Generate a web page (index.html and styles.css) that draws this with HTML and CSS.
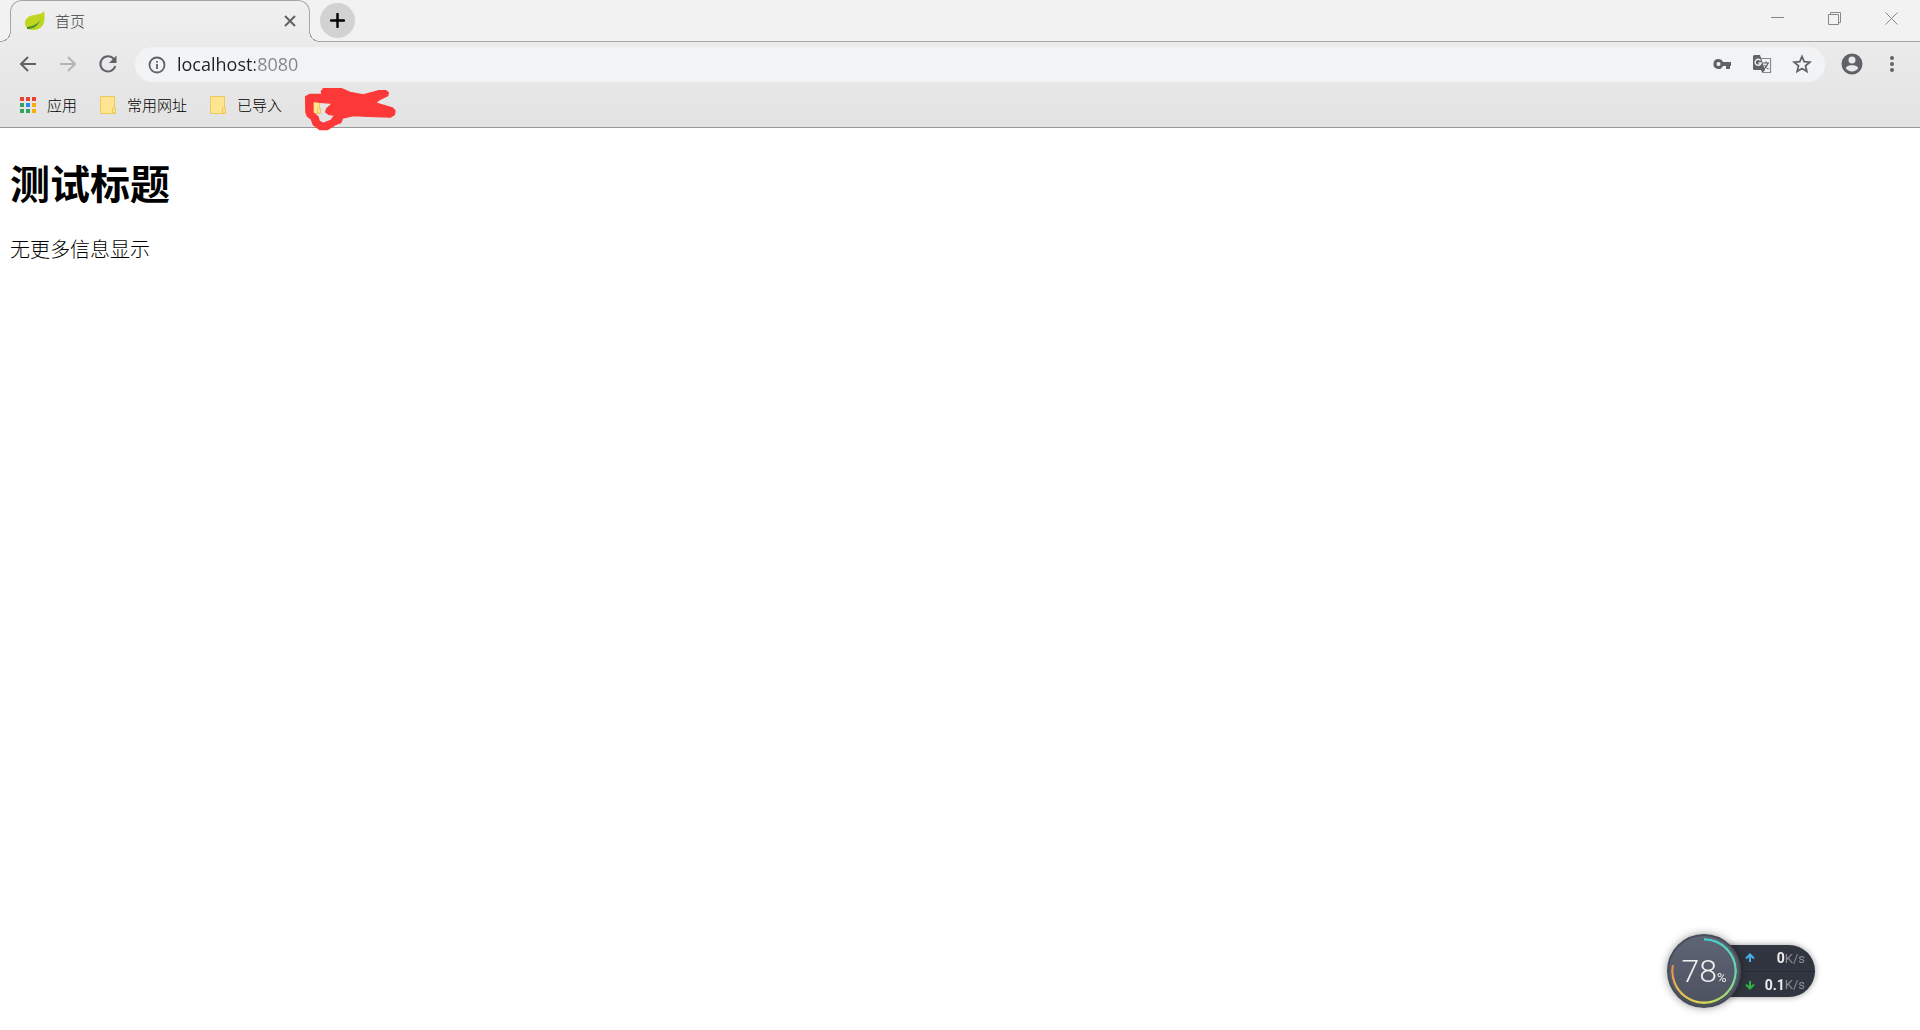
FILE: index.html
```html
<!DOCTYPE html>
<html lang="zh-CN">
<head>
    <meta charset="utf-8">
    <title>首页</title>
    <meta name="viewport" content="width=device-width, initial-scale=1">
    <link rel="stylesheet" href="styles.css">
</head>
<body>
    <header class="browser">
        <div class="tab-strip">
            <div class="tab">
                <svg class="leaf" width="22" height="22" viewBox="0 0 22 22">
                    <path d="M19 1C17 4 14 4 9 5C3 6 0 9 0 13C0 15 1 17 2 18C9 17 14 14 16 9C15 15 10 18 3 19C8 21 15 20 18 15C20 11 20 6 19 1Z" fill="#bfd51f"/>
                    <path d="M2 17C9 16 14 13 16 9C15 15 9 19 2 19Z" fill="#6fae22"/>
                    <path d="M2 17C7 17 11 15 14 12C11 17 7 19 2 19Z" fill="#458f25"/>
                </svg>
                <span class="tab-title">首页</span>
                <button class="tab-close" type="button" aria-label="关闭标签页">
                    <svg width="12" height="12" viewBox="0 0 12 12"><path d="M1 1L11 11M11 1L1 11" stroke="#5f6368" stroke-width="2"/></svg>
                </button>
            </div>
            <button class="new-tab" type="button" aria-label="新标签页">
                <svg width="15" height="15" viewBox="0 0 15 15"><path d="M7.500 1V14M1 7.500H14" stroke="#000" stroke-width="2.400" stroke-linecap="round"/></svg>
            </button>
            <div class="window-controls">
                <button type="button" aria-label="最小化">
                    <svg width="13" height="13" viewBox="0 0 13 13"><path d="M0 5.500H13" stroke="#888"/></svg>
                </button>
                <button type="button" aria-label="还原">
                    <svg width="13" height="13" viewBox="0 0 13 13" fill="none" stroke="#888"><path d="M.5 2.500H10.500V12.500H.5ZM2.500 2.500V.5H12.500V10.500H10.500"/></svg>
                </button>
                <button type="button" aria-label="关闭">
                    <svg width="13" height="13" viewBox="0 0 13 13"><path d="M.5 .5L12.500 12.500M12.500 .5L.5 12.500" stroke="#888"/></svg>
                </button>
            </div>
        </div>

        <div class="toolbar">
            <div class="nav">
                <button type="button" aria-label="后退">
                    <svg width="20" height="20" viewBox="0 0 20 20" fill="none" stroke="#5f6368" stroke-width="2"><path d="M18 10H3M10 3L3 10L10 17"/></svg>
                </button>
                <button type="button" aria-label="前进" disabled>
                    <svg width="20" height="20" viewBox="0 0 20 20" fill="none" stroke="#b3b4b6" stroke-width="2"><path d="M2 10H17M10 3L17 10L10 17"/></svg>
                </button>
                <button type="button" aria-label="重新加载">
                    <svg width="20" height="20" viewBox="0 0 20 20"><path d="M15.800 5A7.600 7.600 0 1 0 17.300 12" fill="none" stroke="#5f6368" stroke-width="2"/><path d="M18.500 1.500V9H11Z" fill="#5f6368"/></svg>
                </button>
            </div>
            <div class="omnibox">
                <svg class="info" width="18" height="18" viewBox="0 0 18 18"><circle cx="9" cy="9" r="7.500" fill="none" stroke="#5f6368" stroke-width="1.800"/><path d="M9 8V13M9 5V6.800" stroke="#5f6368" stroke-width="1.800"/></svg>
                <input class="address" type="text" value="localhost:8080" aria-label="地址栏" spellcheck="false">
                <button type="button" aria-label="密码">
                    <svg width="20" height="20" viewBox="0 0 20 20"><path d="M6.500 5A5 5 0 1 0 11 12H14V15H18V12H19V8H11A5 5 0 0 0 6.500 5Z M6.500 8A2 2 0 1 1 6.500 12A2 2 0 1 1 6.500 8Z" fill="#5f6368" fill-rule="evenodd"/></svg>
                </button>
                <button type="button" aria-label="翻译此页">
                    <svg width="20" height="20" viewBox="0 0 20 20">
                        <path d="M9 4.500H18.500V18.500H11" fill="none" stroke="#85888c" stroke-width="1.200"/>
                        <path d="M1 2.500Q1 1 2.500 1H8L13 16H2.500Q1 16 1 14.500Z M9 16H13L10.500 19Z" fill="#5f6368"/>
                        <path d="M8.500 6.500A3 3 0 1 0 9 9H6.500" fill="none" stroke="#f1f3f4" stroke-width="1.400"/>
                        <path d="M11 9H17M14 7.500V9M16 9Q15 13 12 15M12.500 11Q14 13.500 16.500 15" fill="none" stroke="#5f6368" stroke-width="1.200"/>
                    </svg>
                </button>
                <button type="button" aria-label="为此网页添加书签">
                    <svg width="20" height="20" viewBox="0 0 20 20"><path d="M10 2.500L12.200 7.700L17.800 8.200L13.500 11.900L14.800 17.400L10 14.500L5.200 17.400L6.500 11.900L2.200 8.200L7.800 7.700Z" fill="none" stroke="#5f6368" stroke-width="1.800"/></svg>
                </button>
            </div>
            <div class="nav">
                <button type="button" aria-label="用户">
                    <svg width="22" height="22" viewBox="0 0 22 22"><path d="M11 .5A10.500 10.500 0 1 0 11 21.500A10.500 10.500 0 1 0 11 .5ZM11 3.500A3.500 3.500 0 1 1 11 10.500A3.500 3.500 0 1 1 11 3.500ZM4.700 15C6 12.500 9 12.200 11 12.200S16 12.500 17.300 15C16 17.300 13.500 18.500 11 18.500S6 17.300 4.700 15Z" fill="#5f6368" fill-rule="evenodd"/></svg>
                </button>
                <button type="button" aria-label="菜单">
                    <svg width="20" height="20" viewBox="0 0 20 20" fill="#5f6368"><circle cx="10" cy="4" r="2"/><circle cx="10" cy="10" r="2"/><circle cx="10" cy="16" r="2"/></svg>
                </button>
            </div>
        </div>

        <nav class="bookmarks">
            <a href="#">
                <svg width="17" height="16" viewBox="0 0 17 16">
                    <path d="M0 0H4V4H0ZM6 0H10V4H6ZM12 0H16V4H12Z" fill="#ea4335"/>
                    <path d="M0 6H4V10H0ZM0 12H4V16H0ZM6 12H10V16H6Z" fill="#34a35a"/>
                    <path d="M6 6H10V10H6Z" fill="#2a8af0"/>
                    <path d="M12 6H16V10H12ZM12 12H16V16H12Z" fill="#f9ab0a"/>
                </svg>
                应用
            </a>
            <a href="#">
                <svg width="17" height="18" viewBox="0 0 17 18"><path d="M.5 .5H14.500V12H15.500V17.500H.5Z" fill="#ffe591" stroke="#edc85d"/><path d="M12.500 17V12.500Q14 11.500 15.500 12.500V17Z" fill="#ffe591" stroke="#edc85d"/></svg>
                常用网址
            </a>
            <a href="#">
                <svg width="17" height="18" viewBox="0 0 17 18"><path d="M.5 .5H14.500V12H15.500V17.500H.5Z" fill="#ffe591" stroke="#edc85d"/><path d="M12.500 17V12.500Q14 11.500 15.500 12.500V17Z" fill="#ffe591" stroke="#edc85d"/></svg>
                已导入
            </a>
            <a class="marked" href="#" aria-label="书签">
                <svg width="17" height="18" viewBox="0 0 17 18"><path d="M.5 .5H14.500V12H15.500V17.500H.5Z" fill="#ffe591" stroke="#edc85d"/><path d="M12.500 17V12.500Q14 11.500 15.500 12.500V17Z" fill="#ffe591" stroke="#edc85d"/></svg>
                <svg class="scribble" width="92" height="45" viewBox="15 9 276 135">
                    <path d="M64 22L70 14H124L150 25L190 33L237 20L258 20L265 26L263 35L240 46L226 57L277 72L285 80L283 92L272 99L225 98L160 95L128 102L122 116L106 122L82 137L60 137L40 122L34 106L22 97L18 84L17 38L30 31L66 31ZM39 52L60 55L98 58L80 74L77 84L86 91L104 94L94 108L70 118L58 112L54 98L39 86Z" fill="#fd3838" fill-rule="evenodd" stroke="#fd3838" stroke-width="4" stroke-linejoin="round"/>
                </svg>
            </a>
        </nav>
    </header>

    <main class="page">
        <h1>测试标题</h1>
        <p>无更多信息显示</p>
    </main>

    <aside class="monitor">
        <div class="gauge"><span class="percent">78</span><small>%</small></div>
        <div class="speeds">
            <div class="speed">
                <svg width="10" height="10" viewBox="0 0 10 10"><path d="M5 9V2M1 5.500L5 1.500L9 5.500" fill="none" stroke="#45b0ee" stroke-width="2"/></svg>
                <b>0</b><span>K/s</span>
            </div>
            <div class="speed">
                <svg width="10" height="10" viewBox="0 0 10 10"><path d="M5 1V8M1 4.500L5 8.500L9 4.500" fill="none" stroke="#2fb344" stroke-width="2"/></svg>
                <b>0.1</b><span>K/s</span>
            </div>
        </div>
    </aside>
</body>
</html>
```
FILE: styles.css
```css
:root {
    --line: #a6a6a6;
    --strip: #f2f2f2;
    --tab: #ebebeb;
    --omnibox: #f1f3f4;
}

* {
    box-sizing: border-box;
}

body {
    margin: 0;
    background: #fff;
    color: #000;
    font-family: "Noto Sans CJK SC", sans-serif;
    font-weight: 300;
}

button {
    display: flex;
    align-items: center;
    justify-content: center;
    padding: 0;
    border: none;
    background: none;
    cursor: pointer;
}

svg {
    display: block;
    flex: none;
}

/* Tab strip */
.tab-strip {
    display: flex;
    height: 42px;
    padding-left: 10px;
    background: var(--strip);
    border-bottom: 1px solid var(--line);
}

.tab {
    position: relative;
    display: flex;
    align-items: center;
    width: 300px;
    height: 42px;
    padding: 0 10px 2px 14px;
    background: linear-gradient(#f0f0f0, var(--tab));
    border: 1px solid var(--line);
    border-bottom: none;
    border-radius: 12px 12px 0 0;
}

/* curved feet on both sides of the tab */
.tab::before,
.tab::after {
    content: "";
    position: absolute;
    bottom: 0;
    width: 11px;
    height: 11px;
}

.tab::before {
    right: 100%;
    background: radial-gradient(circle at top left, var(--strip) 10px, var(--line) 10px, var(--line) 11px, var(--tab) 11px);
}

.tab::after {
    left: 100%;
    background: radial-gradient(circle at top right, var(--strip) 10px, var(--line) 10px, var(--line) 11px, var(--tab) 11px);
}

.tab-title {
    flex: 1;
    margin-left: 8px;
    font-size: 15px;
    color: #3c4043;
}

.tab-close {
    width: 18px;
    height: 18px;
}

.new-tab {
    width: 35px;
    height: 35px;
    margin: 3px 0 0 10px;
    border-radius: 50%;
    background: #d2d2d2;
}

.window-controls {
    display: flex;
    margin-left: auto;
}

.window-controls button {
    width: 57px;
    height: 37px;
}

/* Toolbar */
.toolbar {
    display: flex;
    align-items: center;
    gap: 7px;
    padding: 5px 8px 0;
    background: linear-gradient(var(--tab), #e7e7e7);
}

.nav {
    display: flex;
}

.nav button,
.omnibox button {
    width: 40px;
    height: 35px;
    padding-bottom: 1px;
}

.omnibox {
    flex: 1;
    display: flex;
    align-items: center;
    height: 35px;
    padding: 0 3px 0 13px;
    border-radius: 18px;
    background: var(--omnibox);
}

.address {
    flex: 1;
    min-width: 0;
    margin-left: 11px;
    padding: 0 0 2px;
    border: none;
    outline: none;
    font-family: "Open Sans", sans-serif;
    font-size: 18px;
    /* host is dark, port is grey */
    color: transparent;
    background: linear-gradient(to right, #202124 78px, #80868b 78px);
    -webkit-background-clip: text;
    background-clip: text;
}

/* Bookmarks */
.bookmarks {
    display: flex;
    align-items: center;
    gap: 23px;
    height: 46px;
    padding-left: 20px;
    background: linear-gradient(#e7e7e7, #e3e3e3);
    border-bottom: 1px solid #999;
}

.bookmarks a {
    display: flex;
    align-items: center;
    gap: 10px;
    font-size: 15px;
    color: #000;
    text-decoration: none;
}

.marked {
    position: relative;
}

.scribble {
    position: absolute;
    left: 0;
    top: -9px;
}

/* Page content */
.page {
    padding: 0 10px;
    font-size: 20px;
}

.page h1 {
    margin: 26px 0;
    font-size: 40px;
    font-weight: 700;
    line-height: 56px;
}

.page p {
    margin: 0;
    line-height: 26px;
}

/* Floating monitor */
.monitor {
    position: fixed;
    right: 105px;
    bottom: 22px;
    display: flex;
    align-items: center;
    font-family: Roboto, sans-serif;
}

.gauge {
    position: relative;
    z-index: 1;
    display: flex;
    align-items: baseline;
    justify-content: center;
    width: 74px;
    height: 74px;
    border: 2px solid #464c58;
    border-radius: 50%;
    background: linear-gradient(#5f6576, #4c515f);
    box-shadow: 0 0 8px rgba(0, 0, 0, 0.4);
    color: #eee;
    line-height: 70px;
}

.gauge::before {
    content: "";
    position: absolute;
    inset: 2px;
    border-radius: 50%;
    background: conic-gradient(#45cfd0, #62d8a8 25%, #d8d84e 50%, #e8c24c 62%, #e0884e 78%, transparent 78%);
    -webkit-mask: radial-gradient(closest-side, transparent 30px, #000 31px);
    mask: radial-gradient(closest-side, transparent 30px, #000 31px);
}

.percent {
    font-size: 32px;
    font-weight: 300;
}

.gauge small {
    font-size: 13px;
    font-weight: 400;
}

.speeds {
    width: 112px;
    margin-left: -38px;
    padding-left: 42px;
    border-radius: 0 27px 27px 0;
    background: #31353f;
    box-shadow: 0 0 6px rgba(0, 0, 0, 0.4);
}

.speed {
    display: flex;
    align-items: center;
    height: 26px;
    padding-right: 10px;
    color: #8b8e95;
    font-size: 13px;
    font-weight: 400;
}

.speed + .speed {
    border-top: 1px solid #272b33;
}

.speed b {
    margin-left: auto;
    color: #eee;
    font-size: 14px;
}
```
